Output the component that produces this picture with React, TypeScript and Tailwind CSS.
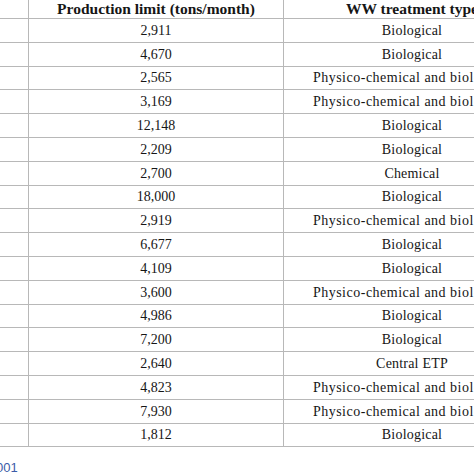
import React from "react";

const rows: [string, string][] = [
  ["2,911", "Biological"],
  ["4,670", "Biological"],
  ["2,565", "Physico-chemical and biological"],
  ["3,169", "Physico-chemical and biological"],
  ["12,148", "Biological"],
  ["2,209", "Biological"],
  ["2,700", "Chemical"],
  ["18,000", "Biological"],
  ["2,919", "Physico-chemical and biological"],
  ["6,677", "Biological"],
  ["4,109", "Biological"],
  ["3,600", "Physico-chemical and biological"],
  ["4,986", "Biological"],
  ["7,200", "Biological"],
  ["2,640", "Central ETP"],
  ["4,823", "Physico-chemical and biological"],
  ["7,930", "Physico-chemical and biological"],
  ["1,812", "Biological"],
];

export default function App() {
  return (
    <div className="w-[474px] h-[474px] overflow-hidden bg-white">
      <div
        className="w-[560px] text-[#161616]"
        style={{ fontFamily: '"Liberation Serif", "Times New Roman", serif' }}
      >
        <div className="flex h-[19px] border-b border-[#b8b8b8] text-[15.5px] font-bold leading-none">
          <div className="w-[29px] shrink-0 border-r border-[#b8b8b8]" />
          <div className="w-[255px] shrink-0 border-r border-[#b8b8b8] flex items-center justify-center whitespace-nowrap">
            Production limit (tons/month)
          </div>
          <div className="w-[256px] shrink-0 flex items-center justify-center whitespace-nowrap">
            WW treatment type
          </div>
        </div>
        {rows.map(([n, t], i) => (
          <div
            key={i}
            className="flex h-[23.8px] border-b border-[#b8b8b8] text-[14px] leading-none"
          >
            <div className="w-[29px] shrink-0 border-r border-[#b8b8b8]" />
            <div className="w-[255px] shrink-0 border-r border-[#b8b8b8] flex items-center justify-center pt-[1px]">
              {n}
            </div>
            <div
              className={
                t.startsWith("Physico")
                  ? "w-[256px] shrink-0 flex items-center justify-center whitespace-nowrap pt-[1px] tracking-[0.5px]"
                  : "w-[256px] shrink-0 flex items-center justify-center whitespace-nowrap pt-[1px] tracking-[0.2px]"
              }
            >
              {t}
            </div>
          </div>
        ))}
      </div>
      <div
        className="mt-[14px] ml-[-4px] text-[13px] leading-none text-[#3b5ca8]"
        style={{ fontFamily: '"Liberation Sans", Arial, sans-serif' }}
      >
        001
      </div>
    </div>
  );
}
